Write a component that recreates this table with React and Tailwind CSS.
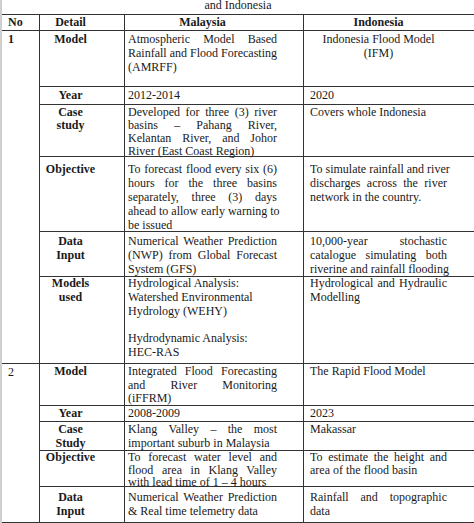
const group1 = [
  {
    h: "h-[56px]",
    c: "leading-[14px] pt-[1px]",
    d: ["Model"],
    my: ["Atmospheric Model Based", "Rainfall and Flood Forecasting", "(AMRFF)"],
    id: ["Indonesia Flood Model", "(IFM)"],
    idCenter: true,
  },
  { h: "h-[18px]", c: "leading-[14px] pt-[1px]", d: ["Year"], my: ["2012-2014"], id: ["2020"] },
  {
    h: "h-[52px]",
    c: "leading-[13px] pt-[1px]",
    d: ["Case", "study"],
    my: [
      "Developed for three (3) river",
      "basins – Pahang River,",
      "Kelantan River, and Johor",
      "River (East Coast Region)",
    ],
    id: ["Covers whole Indonesia"],
  },
  {
    h: "h-[75px]",
    c: "leading-[14px] pt-[5px]",
    d: ["Objective"],
    my: [
      "To forecast flood every six (6)",
      "hours for the three basins",
      "separately, three (3) days",
      "ahead to allow early warning to",
      "be issued",
    ],
    id: [
      "To simulate rainfall and river",
      "discharges across the river",
      "network in the country.",
    ],
  },
  {
    h: "h-[45px]",
    c: "leading-[14px] pt-[2px]",
    d: ["Data", "Input"],
    my: ["Numerical Weather Prediction", "(NWP) from Global Forecast", "System (GFS)"],
    id: ["10,000-year stochastic", "catalogue simulating both", "riverine and rainfall flooding"],
  },
  {
    h: "h-[86px]",
    c: "leading-[13.8px] pt-[0px]",
    d: ["Models", "used"],
    my: [
      "Hydrological Analysis:",
      "Watershed Environmental",
      "Hydrology (WEHY)",
      "",
      "Hydrodynamic Analysis:",
      "HEC-RAS",
    ],
    myLeft: true,
    id: ["Hydrological and Hydraulic", "Modelling"],
  },
];

const group2 = [
  {
    h: "h-[42px]",
    c: "leading-[13.5px] pt-[1px]",
    d: ["Model"],
    my: ["Integrated Flood Forecasting", "and River Monitoring", "(iFFRM)"],
    id: ["The Rapid Flood Model"],
  },
  { h: "h-[16px]", c: "leading-[14px] pt-[0px]", d: ["Year"], my: ["2008-2009"], id: ["2023"] },
  {
    h: "h-[29px]",
    c: "leading-[14px] pt-[0px]",
    d: ["Case", "Study"],
    my: ["Klang Valley – the most", "important suburb in Malaysia"],
    id: ["Makassar"],
  },
  {
    h: "h-[36px]",
    c: "leading-[12.5px] pt-[0px]",
    d: ["Objective"],
    my: ["To forecast water level and", "flood area in Klang Valley", "with lead time of 1 – 4 hours"],
    id: ["To estimate the height and", "area of the flood basin"],
  },
  {
    h: "h-[35px]",
    c: "leading-[14px] pt-[3px]",
    d: ["Data", "Input"],
    my: ["Numerical Weather Prediction", "& Real time telemetry data"],
    id: ["Rainfall and topographic", "data"],
  },
];

function Lines({ lines, left, center }) {
  return lines.map((l, i) => {
    let cls = "text-left";
    if (center) cls = "text-center";
    else if (!left && i < lines.length - 1) cls = "text-justify [text-align-last:justify]";
    return (
      <div key={i} className={`whitespace-nowrap ${cls}`}>
        {l || "\u00a0"}
      </div>
    );
  });
}

function Group({ no, bold, rows }) {
  return (
    <div className="flex border-b border-[#333]">
      <div
        className={`w-[38px] shrink-0 border-r border-[#333] pl-[6px] pt-[1px] leading-[14px] ${
          bold ? "font-bold" : ""
        }`}
      >
        {no}
      </div>
      <div className="flex flex-col">
        {rows.map((r, i) => (
          <div
            key={i}
            className={`flex ${r.h} ${i < rows.length - 1 ? "border-b border-[#333]" : ""}`}
          >
            <div className={`w-[85px] shrink-0 border-r border-[#333] pl-[3px] pr-[26px] text-center font-bold ${r.c}`}>
              {r.d.map((t, j) => (
                <div key={j} className="whitespace-nowrap">
                  {t}
                </div>
              ))}
            </div>
            <div className={`w-[179px] shrink-0 border-r border-[#333] pl-[3px] pr-[26px] ${r.c}`}>
              <Lines lines={r.my} left={r.myLeft} />
            </div>
            <div className={`w-[170px] shrink-0 pl-[6px] pr-[27px] ${r.c}`}>
              <Lines lines={r.id} center={r.idCenter} />
            </div>
          </div>
        ))}
      </div>
    </div>
  );
}

export default function App() {
  return (
    <div className="w-[474px] h-[523px] overflow-hidden bg-white text-[#1a1a1a] text-[12px] leading-[14px] font-['Liberation_Serif','Times_New_Roman',serif]">
      <div className="flex h-full">
        <div className="w-[2px] shrink-0 bg-[#cfcfcf]" />
        <div className="flex-1 flex flex-col">
          <div className="h-[14px] text-center leading-[11px]">and Indonesia</div>
          <div className="border-t border-[#333]">
            <div className="flex h-[16px] border-b border-[#333] font-bold leading-[14px]">
              <div className="w-[38px] shrink-0 border-r border-[#333] pl-[6px]">No</div>
              <div className="w-[85px] shrink-0 border-r border-[#333] pl-[3px] pr-[26px] text-center">Detail</div>
              <div className="w-[179px] shrink-0 border-r border-[#333] pl-[3px] pr-[26px] text-center">Malaysia</div>
              <div className="w-[170px] shrink-0 pl-[6px] pr-[27px] text-center">Indonesia</div>
            </div>
            <Group no="1" bold rows={group1} />
            <Group no="2" rows={group2} />
          </div>
          <div className="flex-1 bg-[#d4d4d4]" />
        </div>
      </div>
    </div>
  );
}
